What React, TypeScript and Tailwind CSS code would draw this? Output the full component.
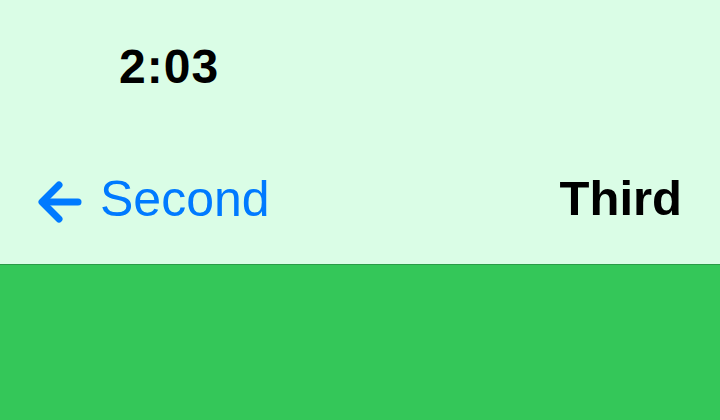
export default function App() {
  return (
    <div className="w-[720px] h-[420px] flex flex-col bg-[#34c759] font-['Liberation_Sans',Arial,sans-serif]">
      <div className="h-[265px] flex flex-col bg-[#dafde6] border-b border-[#2a9b47]">
        <div className="h-[120px] flex items-end pl-[119px] pb-[29px]">
          <span className="text-[48px] leading-none font-bold text-black tracking-[1px]">2:03</span>
        </div>
        <div className="flex-1 flex items-center justify-between pl-[38px] pr-[38px] pt-[13px]">
          <div className="flex items-center gap-[18px] text-[#007aff]">
            <svg width="44" height="42" viewBox="0 0 44 42" fill="none" stroke="#007aff" strokeWidth="7" strokeLinecap="round" strokeLinejoin="round" className="mt-[6px]">
              <path d="M40 21H5" />
              <path d="M21 4L4 21L21 38" />
            </svg>
            <span className="text-[50px] leading-none">Second</span>
          </div>
          <span className="text-[49px] leading-none font-bold text-black">Third</span>
        </div>
      </div>
      <div className="flex-1" />
    </div>
  );
}
